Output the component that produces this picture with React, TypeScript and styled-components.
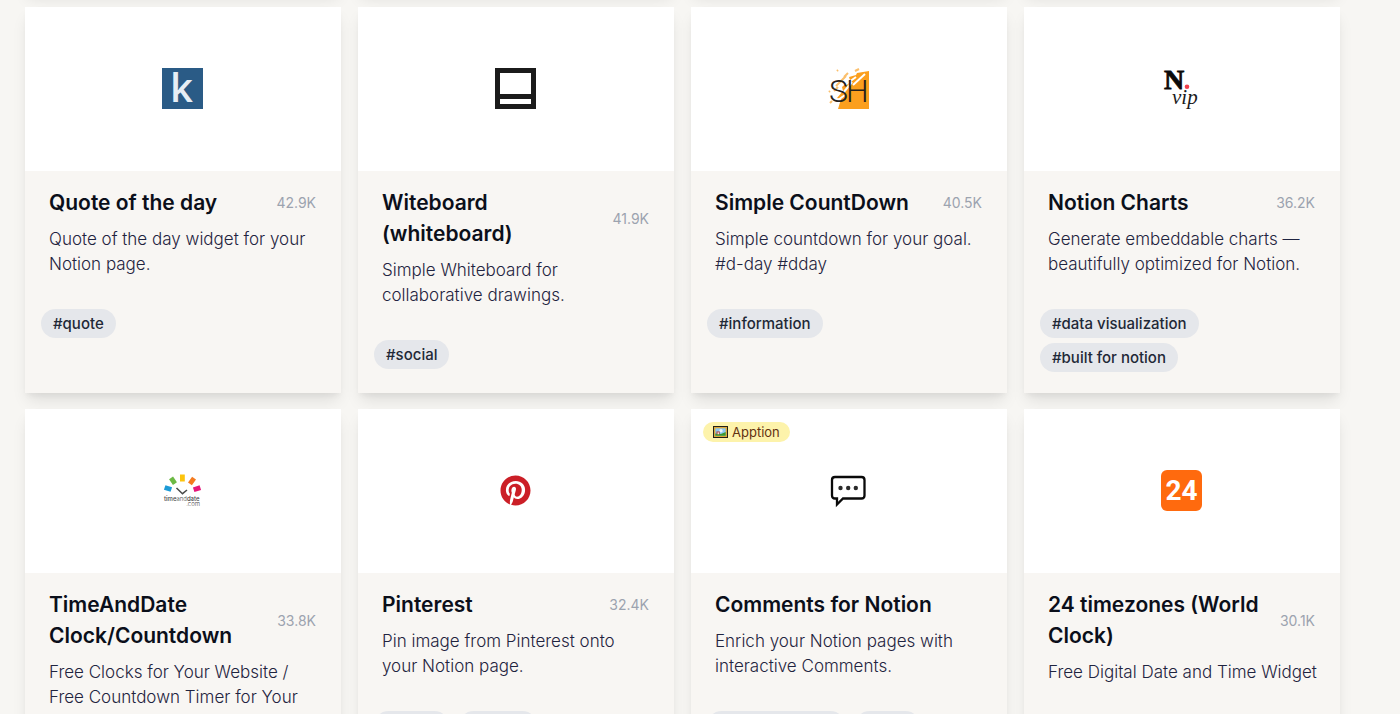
import React from "react";
import styled, { createGlobalStyle } from "styled-components";
import { FaPinterest } from "react-icons/fa";

const GlobalStyle = createGlobalStyle`
  *, *::before, *::after { box-sizing: border-box; }
  body {
    margin: 0;
    background: #f7f6f3;
    font-family: Inter, "Liberation Sans", sans-serif;
    color: #1f2937;
  }
`;

const Page = styled.main`
  overflow: hidden;
  padding: 0 60px 24px 25px;
`;

const Grid = styled.div`
  display: grid;
  grid-template-columns: repeat(4, minmax(0, 1fr));
  column-gap: 17px;
  row-gap: 16px;
  margin-top: -49px;
`;

const shadow = "0 10px 15px -3px rgba(0, 0, 0, 0.1), 0 4px 6px -2px rgba(0, 0, 0, 0.05)";

const CardEnd = styled.div`
  height: 40px;
  background: #f8f6f3;
  box-shadow: ${shadow};
`;

const CardBox = styled.article`
  position: relative;
  background: #f8f6f3;
  box-shadow: ${shadow};
`;

const Cover = styled.div`
  display: flex;
  align-items: center;
  justify-content: center;
  height: 164px;
  padding: 0 1px 1px 0;
  background: #fff;
`;

const Badge = styled.span`
  position: absolute;
  top: 13px;
  left: 12px;
  display: flex;
  align-items: center;
  gap: 4px;
  height: 20px;
  padding: 0 10px;
  border-radius: 10px;
  background: #fdf3ab;
  color: #633112;
  font-size: 13px;
  line-height: 20px;
`;

const Body = styled.div`
  padding: 16px 25px 21px 24px;
`;

const Heading = styled.div`
  display: flex;
  align-items: center;
  justify-content: space-between;
  gap: 16px;
`;

const Title = styled.h2`
  margin: 0;
  font-size: 21px;
  line-height: 31px;
  font-weight: 600;
  color: #0b0f1a;
`;

const Count = styled.span`
  font-size: 14px;
  line-height: 25px;
  color: #9ca3af;
`;

const Description = styled.p`
  margin: 9px -4px 32px 0;
  font-size: 17px;
  line-height: 25px;
  font-weight: 300;
  color: #1f2440;
`;

const Tags = styled.div`
  display: flex;
  flex-wrap: wrap;
  gap: 5px 10px;
  margin: 0 -8px;
`;

const Tag = styled.span`
  padding: 0 12px;
  border-radius: 15px;
  background: #e5e7eb;
  font-size: 15px;
  line-height: 29px;
  font-weight: 500;
  color: #1f2937;
`;

const Logo = styled.svg.attrs({ viewBox: "0 0 41 41", "aria-hidden": true })`
  width: 41px;
  height: 41px;
  overflow: visible;
`;

const PinLogo = styled(FaPinterest)`
  width: 31px;
  height: 31px;
  color: #cb1f27;
`;

const LetterK = () => (
  <Logo>
    <rect width="41" height="41" fill="#2a5b86" />
    <text x="8" y="34" fontFamily="Open Sans" fontSize="40" fontWeight="600" fill="#e6eef5">k</text>
  </Logo>
);

const Board = () => (
  <Logo>
    <rect width="41" height="41" fill="#1b1b1b" />
    <rect x="5" y="5" width="31" height="21" fill="#fff" />
    <rect x="5" y="31" width="31" height="5" fill="#fff" />
  </Logo>
);

const Countdown = () => (
  <Logo>
    <path d="M10 41 L13 31 L9 30 L15 23 L14 19 L22 12 L21 9 L28 7 L29 5 L41 3 V41Z" fill="#fb9f1e" />
    <path d="M15 25 L24 14 M17 17 L28 9 M25 17 L37 6 M10 32 L17 27" stroke="#fff" strokeWidth="2" fill="none" />
    <path d="M8 18 L18 8 M6 23 L10 19 M2 35 L4 33 M1 24 L2 23 M16 9 L20 5 M9 3 L10 2 M27 3 L31 1" stroke="#fbbf6c" strokeWidth="2" fill="none" />
    <g fontFamily="Roboto" fontWeight="300" fontSize="32" fill="#26211c">
      <text x="1" y="34">S</text>
      <text x="18" y="34">H</text>
    </g>
  </Logo>
);

const NotionVip = () => (
  <Logo>
    <text x="3" y="21" fontFamily="Liberation Serif" fontSize="28" fontWeight="700" fill="#0a0a0a" stroke="#0a0a0a" strokeWidth="0.8">N</text>
    <circle cx="26" cy="18.8" r="2.3" fill="#f0404c" />
    <text x="11" y="36" fontFamily="Liberation Serif" fontSize="21" fontStyle="italic" fill="#1b1b1b">vip</text>
  </Logo>
);

const rays = [
  { x: 6, y: 18.5, angle: -72, color: "#1c9ad6" },
  { x: 11, y: 10.8, angle: -34, color: "#6cb944" },
  { x: 20.4, y: 8, angle: 0, color: "#fcc40d" },
  { x: 30, y: 11, angle: 36, color: "#f47b20" },
  { x: 35, y: 18.7, angle: 72, color: "#e5177b" },
];

const TimeAndDate = () => (
  <Logo>
    {rays.map((r) => (
      <rect key={r.color} x={r.x - 2.4} y={r.y - 3.5} width="4.8" height="7" fill={r.color} transform={`rotate(${r.angle} ${r.x} ${r.y})`} />
    ))}
    <path d="M14.5 18 L20.5 23.7 L25 20" stroke="#4a4a4a" strokeWidth="1.5" fill="none" />
    <g fontFamily="Inter" fontSize="6" fill="#444">
      <text x="2" y="31"><tspan fontWeight="500">time</tspan><tspan fontWeight="300">and</tspan><tspan fontWeight="500">date</tspan></text>
      <text x="38" y="36" textAnchor="end" fontWeight="300">.com</text>
    </g>
  </Logo>
);

const Bubble = () => (
  <Logo>
    <path d="M7 7 H33.5 Q36.5 7 36.5 10 V25.5 Q36.5 28.5 33.5 28.5 H15 L9 34.5 V28.5 H7 Q4 28.5 4 25.5 V10 Q4 7 7 7Z" fill="#fff" stroke="#0a0a0a" strokeWidth="2.3" />
    <circle cx="12.5" cy="18" r="2.2" fill="#2a2a2a" />
    <circle cx="20.2" cy="18" r="2.2" fill="#2a2a2a" />
    <circle cx="27.8" cy="18" r="2.2" fill="#2a2a2a" />
  </Logo>
);

const Zones24 = () => (
  <Logo>
    <rect width="41" height="41" rx="6" fill="#ff6a0e" />
    <text x="20.5" y="30" textAnchor="middle" fontFamily="Roboto" fontSize="28" fontWeight="700" fill="#fff">24</text>
  </Logo>
);

const FrameIcon = () => (
  <svg width="15" height="12" viewBox="0 0 15 12" aria-hidden="true">
    <rect width="15" height="12" fill="#222018" />
    <rect x="1" y="1" width="13" height="10" fill="#dca93a" />
    <rect x="2.3" y="2.3" width="10.4" height="7.4" fill="#8cc8ef" />
    <path d="M2.3 9.7 V7.5 L8 8 L12.7 6 V9.7Z" fill="#3d9a2d" />
    <circle cx="8" cy="4.8" r="1.7" fill="#e8f3fa" />
    <rect x="3.4" y="5.4" width="3.4" height="2.8" fill="#b4504c" />
    <rect x="4.6" y="6.4" width="1.4" height="1.8" fill="#f3e6df" />
  </svg>
);

interface Widget {
  title: string;
  count?: string;
  description: string;
  tags: string[];
  badge?: string;
  logo: React.ReactNode;
}

const widgets: Widget[] = [
  { title: "Quote of the day", count: "42.9K", description: "Quote of the day widget for your Notion page.", tags: ["#quote"], logo: <LetterK /> },
  { title: "Witeboard (whiteboard)", count: "41.9K", description: "Simple Whiteboard for collaborative drawings.", tags: ["#social"], logo: <Board /> },
  { title: "Simple CountDown", count: "40.5K", description: "Simple countdown for your goal. #d-day #dday", tags: ["#information"], logo: <Countdown /> },
  { title: "Notion Charts", count: "36.2K", description: "Generate embeddable charts — beautifully optimized for Notion.", tags: ["#data visualization", "#built for notion"], logo: <NotionVip /> },
  { title: "TimeAndDate Clock/Countdown", count: "33.8K", description: "Free Clocks for Your Website / Free Countdown Timer for Your Website", tags: ["#clock"], logo: <TimeAndDate /> },
  { title: "Pinterest", count: "32.4K", description: "Pin image from Pinterest onto your Notion page.", tags: ["#social", "#image"], logo: <PinLogo aria-hidden /> },
  { title: "Comments for Notion", description: "Enrich your Notion pages with interactive Comments.", tags: ["#built for notion", "#chat"], badge: "Apption", logo: <Bubble /> },
  { title: "24 timezones (World Clock)", count: "30.1K", description: "Free Digital Date and Time Widget", tags: ["#clock"], logo: <Zones24 /> },
];

const Card = ({ widget }: { widget: Widget }) => (
  <CardBox>
    <Cover>{widget.logo}</Cover>
    {widget.badge && (
      <Badge>
        <FrameIcon />
        {widget.badge}
      </Badge>
    )}
    <Body>
      <Heading>
        <Title>{widget.title}</Title>
        {widget.count && <Count>{widget.count}</Count>}
      </Heading>
      <Description>{widget.description}</Description>
      <Tags>
        {widget.tags.map((tag) => (
          <Tag key={tag}>{tag}</Tag>
        ))}
      </Tags>
    </Body>
  </CardBox>
);

export default function App() {
  return (
    <>
      <GlobalStyle />
      <Page>
        <Grid>
          {[0, 1, 2, 3].map((n) => (
            <CardEnd key={n} />
          ))}
          {widgets.map((widget) => (
            <Card key={widget.title} widget={widget} />
          ))}
        </Grid>
      </Page>
    </>
  );
}
